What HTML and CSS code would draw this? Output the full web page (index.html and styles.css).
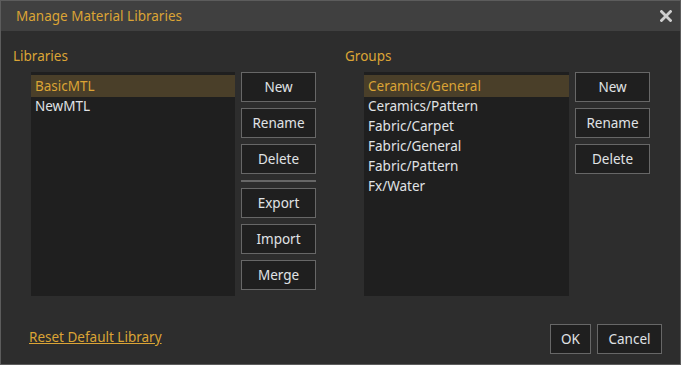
FILE: index.html
```html
<!DOCTYPE html>
<html>
<head>
<meta charset="utf-8">
<link rel="stylesheet" href="styles.css">
</head>
<body>
<div class="dialog">
  <div class="titlebar">
    <span class="title">Manage Material Libraries</span>
    <svg class="close" width="12" height="12" viewBox="0 0 12 12"><path d="M1.5 1.5 L10.5 10.5 M10.5 1.5 L1.5 10.5" stroke="#cfcfcf" stroke-width="2.8" stroke-linecap="square"/></svg>
  </div>
  <div class="content">
    <div class="panels">
      <section class="panel libs">
        <div class="label">Libraries</div>
        <div class="panel-body">
          <ul class="list">
            <li class="item selected">BasicMTL</li>
            <li class="item">NewMTL</li>
          </ul>
          <div class="buttons">
            <button class="btn">New</button>
            <button class="btn">Rename</button>
            <button class="btn">Delete</button>
            <div class="sep"></div>
            <button class="btn">Export</button>
            <button class="btn">Import</button>
            <button class="btn">Merge</button>
          </div>
        </div>
      </section>
      <section class="panel groups">
        <div class="label">Groups</div>
        <div class="panel-body">
          <ul class="list">
            <li class="item selected">Ceramics/General</li>
            <li class="item">Ceramics/Pattern</li>
            <li class="item">Fabric/Carpet</li>
            <li class="item">Fabric/General</li>
            <li class="item">Fabric/Pattern</li>
            <li class="item">Fx/Water</li>
          </ul>
          <div class="buttons">
            <button class="btn">New</button>
            <button class="btn">Rename</button>
            <button class="btn">Delete</button>
          </div>
        </div>
      </section>
    </div>
    <div class="footer">
      <a class="reset" href="#">Reset Default Library</a>
      <div class="actions">
        <button class="btn ok">OK</button>
        <button class="btn cancel">Cancel</button>
      </div>
    </div>
  </div>
</div>
</body>
</html>
```
FILE: styles.css
```css
* { box-sizing: border-box; }
html, body { margin: 0; padding: 0; background: #2d2d2d; }
body { font-family: "Noto Sans", "Open Sans", sans-serif; font-size: 13.5px; }
.dialog {
  width: 681px; height: 365px;
  border: 1px solid #5c5c5c;
  background: #2d2d2d;
  display: flex; flex-direction: column;
}
.titlebar {
  height: 30px; background: #404040;
  display: flex; align-items: center; justify-content: space-between;
  padding: 0 8px 0 15px;
}
.title { color: #dba435; font-size: 13.5px; }
.close { display: block; }
.content {
  flex: 1; display: flex; flex-direction: column;
  padding: 16px 18px 10px 12px;
}
.panels { display: flex; }
.panel { display: flex; flex-direction: column; }
.libs { width: 332px; }
.label { color: #dba435; line-height: 18px; height: 18px; margin-bottom: 7px; }
.panel-body { display: flex; gap: 6px; padding-left: 18px; }
.groups .panel-body { padding-left: 19px; }
.list {
  list-style: none; margin: 0; padding: 4px 0 0;
  width: 204px; height: 224px; background: #1f1f1f;
}
.groups .list { width: 205px; }
.item { height: 20px; line-height: 20px; padding-left: 4px; color: #e0e3e6; white-space: nowrap; }
.item.selected { background: #4a3f29; color: #dba435; box-shadow: 0 1px 0 #4a3f29, 0 -1px 0 #4a3f29; }
.buttons { display: flex; flex-direction: column; gap: 6px; }
.btn {
  width: 75px; height: 30px; padding: 0;
  background: #1f1f1f; border: 1px solid #676767;
  color: #e0e3e6; font-family: inherit; font-size: 13.5px;
}
.sep { height: 2px; background: #676767; width: 75px; }
.footer { margin-top: auto; display: flex; align-items: flex-end; justify-content: space-between; padding-left: 16px; }
.reset { color: #dba435; text-decoration: underline; margin-bottom: 8px; }
.actions { display: flex; gap: 6px; }
.ok { width: 41px; }
.cancel { width: 65px; }
```
